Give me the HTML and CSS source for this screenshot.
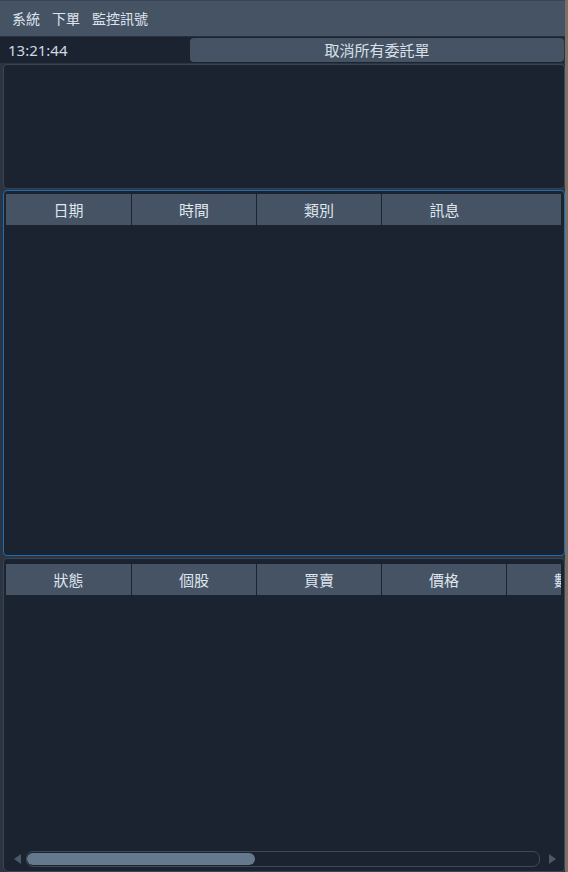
FILE: index.html
```html
<!DOCTYPE html>
<html lang="zh-Hant">
<head>
<meta charset="utf-8">
<title>監控訊號</title>
<link rel="stylesheet" href="styles.css">
</head>
<body>
<div class="window">
  <div class="menubar">
    <span class="menu-item">系統</span>
    <span class="menu-item">下單</span>
    <span class="menu-item">監控訊號</span>
  </div>
  <div class="toolbar">
    <div class="clock">13:21:44</div>
    <div class="btn">取消所有委託單</div>
  </div>
  <div class="panel panel-top"></div>
  <div class="panel panel-log selected">
    <div class="grid-header">
      <div class="col">日期</div>
      <div class="col">時間</div>
      <div class="col">類別</div>
      <div class="col last">訊息</div>
      <div class="filler"></div>
    </div>
    <div class="grid-body"></div>
  </div>
  <div class="panel panel-orders">
    <div class="grid-header clip">
      <div class="col">狀態</div>
      <div class="col">個股</div>
      <div class="col">買賣</div>
      <div class="col">價格</div>
      <div class="col">數量</div>
    </div>
    <div class="grid-body"></div>
    <div class="hscroll">
      <svg class="arrow" width="7" height="10" viewBox="0 0 7 10"><polygon points="7,0 7,10 0,5" fill="#4a5869"/></svg>
      <div class="track"><div class="thumb"></div></div>
      <svg class="arrow" width="7" height="10" viewBox="0 0 7 10"><polygon points="0,0 0,10 7,5" fill="#4a5869"/></svg>
    </div>
  </div>
</div>
</body>
</html>
```
FILE: styles.css
```css
* { box-sizing: border-box; }
html, body { margin: 0; padding: 0; }
body {
  width: 568px;
  height: 872px;
  overflow: hidden;
  background: linear-gradient(90deg, #5e5852, #7a7066);
  font-family: "Noto Sans", "Noto Sans CJK TC", sans-serif;
}
.window {
  width: 565px;
  height: 872px;
  background: #2b3542;
  display: flex;
  flex-direction: column;
}
.menubar {
  height: 37px;
  background: #465365;
  border-top: 1px solid #3a4555;
  border-bottom: 1px solid #27303c;
  display: flex;
  align-items: center;
  padding-left: 12px;
  gap: 12px;
  font-size: 14px;
  line-height: 20px;
  color: #dde4ec;
}
.toolbar {
  height: 26px;
  display: flex;
  align-items: stretch;
  background: #1b2330;
  border-right: 1px solid #2b3542;
}
.clock {
  width: 190px;
  padding-left: 8px;
  display: flex;
  align-items: center;
  font-size: 15px;
  color: #cfd9e4;
}
.btn {
  flex: 1;
  margin: 1px 0 1px 0;
  background: #465365;
  border-radius: 4px;
  display: flex;
  align-items: center;
  justify-content: center;
  font-size: 15px;
  line-height: 20px;
  color: #d8e0e8;
}
.panel {
  margin-left: 3px;
  width: 562px;
  background: #1b2330;
  border: 1px solid #3a4554;
  border-radius: 4px;
  display: flex;
  flex-direction: column;
}
.panel-top {
  margin-top: 1px;
  height: 125px;
}
.panel-log {
  margin-top: 1px;
  height: 366px;
  padding: 3px 3px 0 2px;
}
.panel-log.selected {
  border-color: #1f6db3;
}
.panel-orders {
  margin-top: 2px;
  flex: 1;
  padding: 5px 3px 4px 2px;
  border-bottom-left-radius: 6px;
}
.grid-header {
  height: 31px;
  display: flex;
  flex-shrink: 0;
  background: #465365;
  overflow: hidden;
}
.col {
  width: 125px;
  flex-shrink: 0;
  border-right: 1px solid #1b2330;
  display: flex;
  align-items: center;
  justify-content: center;
  font-size: 15px;
  line-height: 20px;
  color: #dfe6ee;
}
.col:first-child { width: 126px; }
.col.last { border-right: none; }
.filler { flex: 1; }
.grid-body { flex: 1; }
.hscroll {
  height: 16px;
  display: flex;
  align-items: center;
  padding-left: 8px;
  padding-right: 5px;
}
.hscroll .arrow { flex-shrink: 0; }
.track {
  flex: 1;
  height: 16px;
  margin: 0 9px 0 5px;
  border: 1px solid #3d4a5a;
  border-radius: 7px;
  padding: 1px 0;
}
.thumb {
  width: 228px;
  height: 12px;
  background: #647a8c;
  border-radius: 6px;
}
```
